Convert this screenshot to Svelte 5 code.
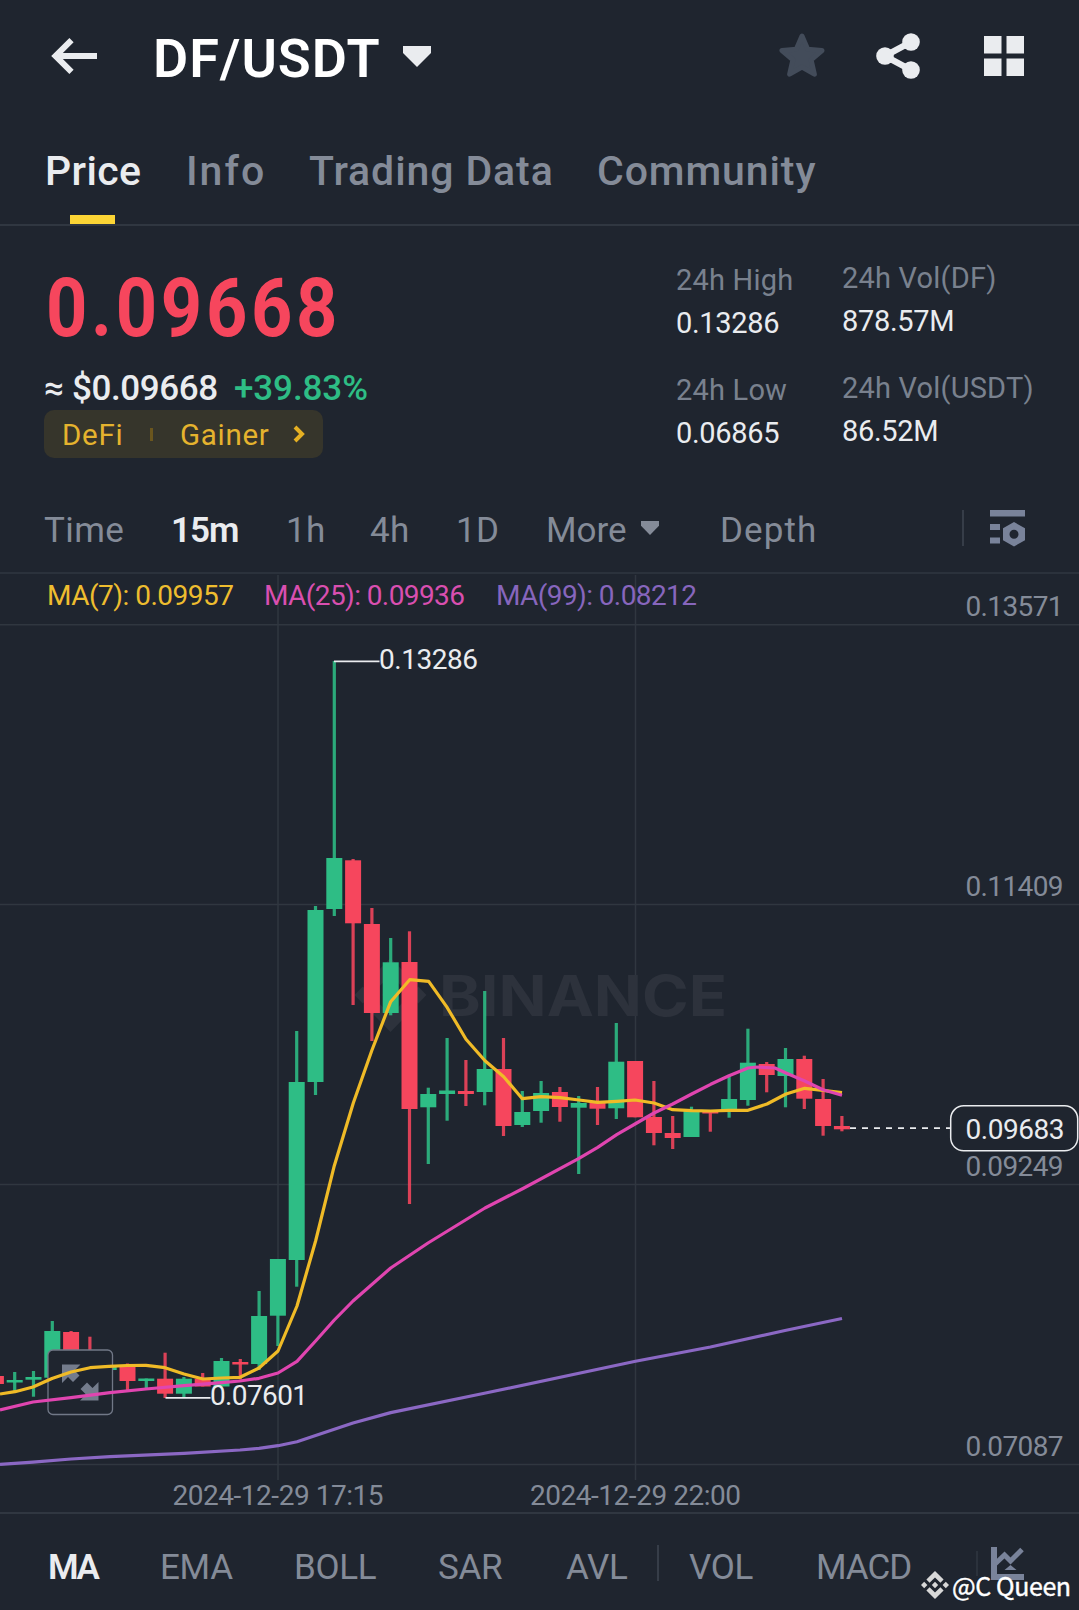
<!-- App.svelte -->
<script lang="ts">
    const tabs = ['Price', 'Info', 'Trading Data', 'Community'];
    const intervals = ['Time', '15m', '1h', '4h', '1D'];
    const indicators = ['MA', 'EMA', 'BOLL', 'SAR', 'AVL'];

    let activeTab = $state('Price');
    let activeInterval = $state('15m');
    let activeIndicator = $state('MA');

    const stats = [
        [
            { label: '24h High', value: '0.13286' },
            { label: '24h Low', value: '0.06865' },
        ],
        [
            { label: '24h Vol(DF)', value: '878.57M' },
            { label: '24h Vol(USDT)', value: '86.52M' },
        ],
    ];

    const legend = [
        { text: 'MA(7): 0.09957', x: 47, width: 187, color: '#eebd2f' },
        { text: 'MA(25): 0.09936', x: 264, width: 201, color: '#d94fb0' },
        { text: 'MA(99): 0.08212', x: 496, width: 201, color: '#8766bd' },
    ];

    const axis = [
        { text: '0.13571', y: 624.7 },
        { text: '0.11409', y: 904.5 },
        { text: '0.09249', y: 1184.5 },
        { text: '0.07087', y: 1464.5 },
    ];

    const times = [
        { text: '2024-12-29 17:15', x: 278 },
        { text: '2024-12-29 22:00', x: 635.5 },
    ];

    const UP = '#2ebd85';
    const DOWN = '#f6465d';
    const STEP = 18.8;
    const candleX = (i: number) => 14.7 + (i - 1) * STEP;

    // direction, high, body top, body bottom, low
    const candles: [string, number, number, number, number][] = [
        [DOWN, 1376, 1376, 1384, 1384],
        [UP, 1372, 1380, 1382.5, 1390.7],
        [UP, 1371, 1377, 1379.7, 1396.7],
        [UP, 1321, 1331, 1377.7, 1377.7],
        [DOWN, 1331, 1332, 1362, 1370],
        [DOWN, 1336.7, 1362, 1368, 1372],
        [UP, 1362, 1367, 1370, 1374],
        [DOWN, 1363.5, 1365, 1381, 1392],
        [UP, 1378.5, 1378.5, 1381, 1388],
        [DOWN, 1352.7, 1378.7, 1393.7, 1398],
        [UP, 1377, 1378.7, 1393.7, 1397.5],
        [DOWN, 1373, 1378.7, 1386.5, 1386.5],
        [UP, 1358, 1361, 1386.5, 1386.5],
        [DOWN, 1359, 1362, 1364.5, 1379.5],
        [UP, 1291, 1316, 1364, 1370],
        [UP, 1259, 1259, 1315.7, 1346],
        [UP, 1031, 1082, 1260, 1286.7],
        [UP, 906, 910, 1082, 1095],
        [UP, 661, 858, 909, 916],
        [DOWN, 859, 860.3, 923.3, 1005],
        [DOWN, 908, 924, 1013, 1041],
        [UP, 938, 962.3, 1013, 1015.3],
        [DOWN, 931.3, 962, 1109, 1204],
        [UP, 1087.7, 1094, 1107.3, 1164],
        [UP, 1038, 1090.5, 1094, 1120.7],
        [DOWN, 1060, 1091, 1094, 1106],
        [UP, 991, 1069, 1092, 1105.3],
        [DOWN, 1038, 1069, 1126, 1136],
        [UP, 1091, 1112, 1125, 1127],
        [UP, 1081, 1093, 1111, 1122.7],
        [DOWN, 1087, 1092, 1107, 1121.7],
        [UP, 1096, 1103, 1107.7, 1174],
        [DOWN, 1087, 1103, 1108.7, 1125],
        [UP, 1023, 1061.7, 1108.3, 1119],
        [DOWN, 1061, 1061, 1117.3, 1117.3],
        [DOWN, 1081, 1117, 1133, 1145.3],
        [DOWN, 1116, 1133, 1138, 1149],
        [UP, 1106.7, 1111, 1137, 1137],
        [DOWN, 1110.3, 1111, 1113.5, 1131.7],
        [UP, 1076, 1099, 1110.3, 1117.7],
        [UP, 1028.7, 1062.7, 1100, 1105.7],
        [DOWN, 1062, 1064, 1075, 1092.3],
        [UP, 1048, 1059, 1076, 1107.3],
        [DOWN, 1055.7, 1059, 1098.7, 1109],
        [DOWN, 1079, 1099, 1126, 1135.7],
        [DOWN, 1116, 1126, 1129.3, 1131.3],
    ];

    const ma7 = '0,1394 15,1391.7 33,1387 52,1378.5 71,1372 90,1367.7 109,1366.3 127,1365.5 146,1365.3 165,1367.7 184,1374 203,1379 221.5,1378 240,1377.3 259,1368 278,1351 297,1306 315.6,1241 334.3,1165.7 353.3,1103 372,1050 390.7,1001.7 409.7,979.7 428.7,981.3 447.3,1007.7 466,1039.3 485,1060.7 503.7,1076.7 522.3,1098.7 541,1096.7 560,1097.7 579,1100 597.7,1102.3 616.7,1101.3 635,1100 654,1103 672.7,1109.7 691.7,1110.7 710.7,1111 729,1110.3 748,1110.3 767,1104 786,1094 804.7,1088.3 823,1090.3 842,1092.7';
    const ma25 = '0,1410 33,1402 71,1397.7 110,1392.7 146,1389 184,1385.7 221.5,1382.7 240,1381 259,1378.3 278,1373 297,1361.3 315.6,1341 334.3,1320 353,1301 390.7,1268 428,1243 485,1208 523,1188.5 579,1158.3 597.7,1147.3 616.7,1134.7 635,1124 654,1113 672.7,1104 691.7,1094 710.7,1084.3 729,1075.7 748,1068 757,1067 775,1068 786,1073 804.7,1081 823,1089.7 842,1095.3';
    const ma99 = '0,1464.3 33,1462.2 71,1459 110,1456.7 184,1453.3 240,1450 259,1448.3 278,1445.7 297,1441.7 315.6,1435.5 353,1423 390.7,1412.6 485.6,1393 635.5,1361.3 710.4,1347 785,1330.5 842,1318.5';
</script>

{#snippet caret(width: number, height: number)}
    <svg {width} {height} viewBox="0 0 28 21" preserveAspectRatio="none">
        <path d="M0 0H28V7L14 21L0 7Z" fill="currentColor" />
    </svg>
{/snippet}

{#snippet diamonds()}
    <path d="M14 0l8.600 8.600-3.200 3.200L14 6.400l-5.400 5.400-3.200-3.200z" />
    <path d="M14 28l8.600-8.600-3.200-3.200L14 21.600l-5.400-5.400-3.200 3.200z" />
    <path d="M14 10.800l3.200 3.200-3.200 3.200-3.200-3.200z" />
    <path d="M3.200 10.800l3.200 3.200-3.200 3.200L0 14z" />
    <path d="M24.800 10.800L28 14l-3.200 3.200-3.200-3.200z" />
{/snippet}

<div class="screen">
    <header>
        <svg class="back" width="46" height="36" viewBox="0 0 46 36">
            <path d="M20.500 2.200 4.500 18l16 15.800M5 18H46" fill="none" stroke="#eaecef" stroke-width="6" />
        </svg>
        <h1>DF/USDT</h1>
        <span class="pair-caret">{@render caret(28, 21)}</span>
        <div class="actions">
            <svg width="46" height="46" viewBox="0 0 46 46">
                <path d="M23 3l5.700 13.300 14.300 1.200-10.900 9.400 3.300 14.300L23 34l-12.400 7.200 3.300-14.300L3 17.500l14.300-1.200z" fill="#434c5a" stroke="#434c5a" stroke-width="5" stroke-linejoin="round" />
            </svg>
            <svg width="44" height="46" viewBox="0 0 44 46" fill="#eaecef">
                <path d="M35 9 9 23l26 14" fill="none" stroke="#eaecef" stroke-width="6.500" />
                <circle cx="35" cy="9" r="8.800" />
                <circle cx="9" cy="23" r="8.800" />
                <circle cx="35" cy="37" r="8.800" />
            </svg>
            <svg width="40" height="40" viewBox="0 0 40 40" fill="#eaecef">
                <path d="M0 0h17.500v17.500H0zM22.500 0H40v17.500H22.500zM0 22.500h17.500V40H0zM22.500 22.500H40V40H22.500z" />
            </svg>
        </div>
    </header>

    <nav class="tabs">
        {#each tabs as tab}
            <button class:active={activeTab === tab} onclick={() => (activeTab = tab)}>{tab}</button>
        {/each}
    </nav>

    <section class="summary">
        <div class="quote">
            <div class="price">0.09668</div>
            <div class="fiat"><span class="approx">≈</span><span class="usd">$0.09668</span><span class="change">+39.83%</span></div>
            <div class="tag">
                <span class="defi">DeFi</span>
                <i></i>
                <span class="gainer">Gainer</span>
                <svg width="12" height="18" viewBox="0 0 12 18">
                    <path d="M2 2l7 7-7 7" fill="none" stroke="#e5b023" stroke-width="4" />
                </svg>
            </div>
        </div>
        <div class="stats">
            {#each stats as column}
                <dl>
                    {#each column as item}
                        <dt>{item.label}</dt>
                        <dd>{item.value}</dd>
                    {/each}
                </dl>
            {/each}
        </div>
    </section>

    <nav class="intervals">
        {#each intervals as item}
            <button class:active={activeInterval === item} onclick={() => (activeInterval = item)}>{item}</button>
        {/each}
        <button class="more">More {@render caret(18, 14)}</button>
        <button class="depth">Depth</button>
        <i></i>
        <svg width="36" height="37" viewBox="0 0 36 37" fill="#79839a">
            <path d="M0 0h35v6.500H0zM0 14h10v6H0zM0 27.500h10v6H0z" />
            <path fill-rule="evenodd" d="M24 12l11 6.200v12L24 36.500l-11-6.300v-12zM24 19.800a4.500 4.500 0 1 0 0 9 4.500 4.500 0 0 0 0-9z" />
        </svg>
    </nav>

    <svg class="chart" width="1079" height="938" viewBox="0 574 1079 938">
        <g stroke="#303740" stroke-width="1.500">
            {#each axis as row}
                <path d="M0 {row.y}H1079" />
            {/each}
            {#each times as time}
                <path d="M{time.x} 575V1480" />
            {/each}
        </g>

        <g fill="#2d323c">
            <g transform="translate(354.500 958) scale(2.570 2.640)">{@render diamonds()}</g>
            <text class="brand" x="439" y="1015.500" textLength="288" lengthAdjust="spacingAndGlyphs">BINANCE</text>
        </g>

        {#each candles as [color, high, top, bottom, low], i}
            <rect x={candleX(i) - 1.6} y={high} width="3.200" height={low - high} fill={color} opacity="0.880" />
            <rect x={candleX(i) - 8} y={top} width="16" height={bottom - top} fill={color} />
        {/each}

        <!-- fullscreen button -->
        <rect x="48" y="1350" width="64.500" height="64.500" rx="5" fill="#1f252f" stroke="#717887" stroke-width="1.300" />
        <g fill="#747c8c">
            <path d="M62 1364.500h18.500l-6 6 5 5-6.500 6.500-5-5-6 6z" />
            <path d="M98.500 1400.500h-18.500l6-6-5.500-5.500 6.500-6.500 5.500 5.500 6-6z" />
        </g>

        <g fill="none" stroke-width="3.200" stroke-linejoin="round">
            <polyline points={ma99} stroke="#8b68c4" />
            <polyline points={ma7} stroke="#f0bb27" />
            <polyline points={ma25} stroke="#e045b0" />
        </g>

        <g fill="none" stroke="#eaecef" stroke-width="1.700">
            <path d="M334 661.300H379.500M165.500 1397.800H210.500" />
            <path d="M850 1128.200H950" stroke-dasharray="6 6" />
        </g>
        <rect x="950.700" y="1105.800" width="127" height="45" rx="13" fill="#1f252f" stroke="#eaecef" stroke-width="1.500" />

        <g class="marks">
            <text x="379" y="669" textLength="99">0.13286</text>
            <text x="210" y="1404.500" textLength="98">0.07601</text>
            <text x="965.500" y="1139" textLength="99">0.09683</text>
        </g>

        {#each legend as item}
            <text x={item.x} y="605" textLength={item.width} fill={item.color}>{item.text}</text>
        {/each}
        {#each axis as row}
            <text x="965.500" y={row.y - 8.7} textLength="98" fill="#848b98">{row.text}</text>
        {/each}
        {#each times as time}
            <text x={time.x} y="1505" text-anchor="middle" textLength="211" fill="#848b98">{time.text}</text>
        {/each}
    </svg>

    <footer>
        {#each indicators as item}
            <button class:active={activeIndicator === item} onclick={() => (activeIndicator = item)}>{item}</button>
        {/each}
        <i></i>
        <button>VOL</button>
        <button class="macd">MACD</button>
        <i class="short"></i>
        <svg width="33" height="33" viewBox="0 0 33 33">
            <path d="M3 0V30H33" fill="none" stroke="#79839a" stroke-width="6" />
            <path d="M4 17 13.500 8l6 6L31 2.500" fill="none" stroke="#79839a" stroke-width="5" />
            <path d="M19.500 18l6 5h-12z" fill="#79839a" />
        </svg>
    </footer>

    <div class="author">
        <svg width="28" height="28" viewBox="0 0 28 28" fill="#d8d8d8">{@render diamonds()}</svg>
        <span>@C Queen</span>
    </div>
</div>

<style>
    :global(body) {
        background: #1f252f;
    }

    .screen {
        position: relative;
        width: 1079px;
        height: 1610px;
        overflow: hidden;
        background: #1f252f;
        color: #eaecef;
        font-family: Roboto, "Noto Sans", sans-serif;
    }

    svg {
        display: block;
        flex: none;
    }

    button {
        padding: 0;
        border: 0;
        background: none;
        color: #848b98;
        font: inherit;
        letter-spacing: inherit;
        text-align: left;
        white-space: nowrap;
        cursor: pointer;
    }

    header {
        display: flex;
        align-items: center;
        height: 112px;
        padding: 0 55px 0 51px;
    }

    h1 {
        width: 250px;
        margin: 5px 0 0 56px;
        font-size: 54px;
        font-weight: 600;
        line-height: 60px;
        letter-spacing: 1px;
        color: #fff;
        white-space: nowrap;
    }

    .actions {
        display: flex;
        align-items: center;
        margin-left: auto;
    }

    .actions svg:nth-child(2) {
        margin: 0 64px 0 51px;
    }

    .tabs {
        display: grid;
        grid-template-columns: 141px 123px 288px auto;
        height: 112px;
        padding-left: 45px;
        border-bottom: 2px solid #303741;
        font-size: 41px;
        font-weight: 500;
        letter-spacing: 0.9px;
    }

    .tabs button {
        position: relative;
        padding-top: 5px;
    }

    .tabs button:nth-child(2) {
        letter-spacing: 2px;
    }

    .tabs .active {
        color: #eaecef;
        letter-spacing: 0.4px;
    }

    .tabs .active::after {
        content: "";
        position: absolute;
        left: 25px;
        bottom: 0;
        width: 45px;
        height: 9px;
        background: #fcd535;
    }

    .summary {
        display: flex;
        height: 261px;
        padding-left: 44px;
        box-sizing: border-box;
    }

    .quote {
        width: 632px;
        padding-top: 30px;
    }

    .price {
        width: 340px;
        margin-left: 2px;
        font-size: 82px;
        font-weight: 700;
        line-height: 104px;
        letter-spacing: 4.2px;
        color: #f6465d;
        transform: scaleX(0.88);
        transform-origin: left;
    }

    .fiat {
        display: flex;
        height: 44px;
        padding-top: 6px;
        font-size: 35px;
        font-weight: 500;
        line-height: 45px;
        letter-spacing: -0.3px;
    }

    .approx {
        width: 28px;
    }

    .usd {
        width: 162px;
        letter-spacing: -0.4px;
    }

    .change {
        color: #2ebd85;
        letter-spacing: -0.1px;
    }

    .tag {
        display: flex;
        align-items: center;
        width: 279px;
        height: 48px;
        padding-left: 18px;
        border-radius: 10px;
        background: #36352b;
        color: #e5b32e;
        font-size: 29.5px;
        letter-spacing: 0.7px;
        box-sizing: border-box;
    }

    .tag span {
        padding-top: 2px;
    }

    .defi {
        width: 88px;
    }

    .tag i {
        width: 3px;
        height: 13px;
        background: #6b561e;
    }

    .gainer {
        width: 113px;
        margin-left: 27px;
    }

    .stats {
        display: grid;
        grid-template-columns: 166px auto;
        padding-top: 33px;
        font-size: 29px;
        line-height: 43px;
        white-space: nowrap;
    }

    dl {
        margin: 0;
    }

    dl:last-child {
        margin-top: -2px;
    }

    dt {
        color: #79818e;
        letter-spacing: 0.2px;
    }

    dd {
        margin: 0 0 24px;
        letter-spacing: -0.3px;
    }

    .intervals {
        display: grid;
        grid-template-columns: 127px 115px 84px 86px 90px 174px 242px 28px auto;
        align-items: center;
        height: 85px;
        padding-left: 44px;
        border-bottom: 2px solid #2b323c;
        font-size: 35px;
    }

    .intervals button {
        padding-top: 2px;
        letter-spacing: 0.4px;
    }

    .intervals .active {
        color: #eaecef;
        font-weight: 600;
        letter-spacing: -1px;
    }

    .intervals .more {
        display: flex;
        align-items: center;
        gap: 14px;
        letter-spacing: 0;
    }

    .intervals .more svg {
        margin-bottom: 6px;
    }

    .intervals .depth {
        letter-spacing: 1.1px;
    }

    .intervals > svg {
        margin-bottom: 2px;
    }

    .intervals i,
    footer i {
        width: 2px;
        height: 36px;
        background: #363d48;
    }

    .intervals i {
        margin-bottom: 4px;
    }

    .chart {
        font-size: 28px;
    }

    .marks {
        fill: #eaecef;
    }

    .brand {
        font-family: Inter, sans-serif;
        font-size: 56px;
        font-weight: 700;
    }

    footer {
        display: grid;
        grid-template-columns: 112px 134px 144px 128px 91px 32px 127px 160px 15px auto;
        align-items: center;
        height: 96px;
        padding: 4px 0 0 48px;
        border-top: 2px solid #303741;
        font-size: 35px;
        letter-spacing: -0.3px;
        box-sizing: border-box;
    }

    footer button {
        padding-top: 8px;
    }

    footer .macd {
        letter-spacing: -1px;
    }

    footer .active {
        color: #eaecef;
        font-weight: 600;
        letter-spacing: -2.4px;
    }

    footer .short {
        height: 25px;
        background: #2b323c;
    }

    .author {
        position: absolute;
        left: 921px;
        top: 1567px;
        display: flex;
        align-items: center;
        gap: 3px;
        color: #fff;
        font-family: "Noto Sans CJK SC", sans-serif;
        font-size: 25px;
        font-weight: 400;
        line-height: 36px;
        letter-spacing: -0.4px;
        white-space: nowrap;
        -webkit-text-stroke: 0.4px #fff;
    }
</style>
